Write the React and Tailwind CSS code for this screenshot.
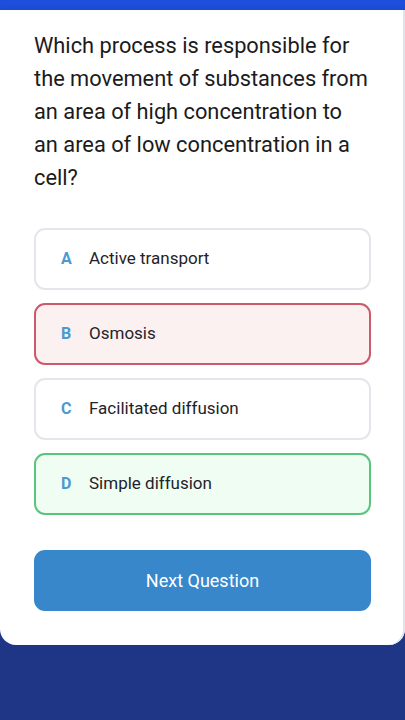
const options = [
  { letter: "A", text: "Active transport", style: "border-[#e3e6ea] bg-white" },
  { letter: "B", text: "Osmosis", style: "border-[#cc5a6c] bg-[#fcf1f1]" },
  { letter: "C", text: "Facilitated diffusion", style: "border-[#e3e6ea] bg-white" },
  { letter: "D", text: "Simple diffusion", style: "border-[#5bc47c] bg-[#effdf3]" },
]

function App() {
  return (
    <div className="h-[720px] overflow-hidden bg-[#1f3687] font-['Roboto',sans-serif]">
      <div className="h-[10px] bg-[#1d4fdc]"></div>
      <div className="h-[635px] bg-white rounded-b-[16px] shadow-[inset_-2px_0_0_#dfe3ea,0_-2px_4px_rgba(0,0,0,0.08)] px-[34px] pt-[19px]">
        <h1 className="mr-[-8px] text-[21.8px] leading-[33px] text-[#1b1b1b]">
          Which process is responsible for<br />
          the movement of substances from<br />
          an area of high concentration to<br />
          an area of low concentration in a<br />
          cell?
        </h1>
        <div className="mt-[34px] flex flex-col gap-[13px]">
          {options.map(o => (
            <div key={o.letter} className={`h-[62px] rounded-[11px] border-2 flex items-center px-[25px] ${o.style}`}>
              <span className="w-[28px] text-[16px] font-bold text-[#4a9ad1]">{o.letter}</span>
              <span className="text-[17px] text-[#1f2328]">{o.text}</span>
            </div>
          ))}
        </div>
        <button className="mt-[35px] w-full h-[61px] rounded-[11px] bg-[#3887cb] text-white text-[18px]">
          Next Question
        </button>
      </div>
      <div className="px-[40px] pt-[69px] text-[20px] font-bold text-[#dce6ff]">
        Question 3 of 10
      </div>
    </div>
  )
}

export default App
